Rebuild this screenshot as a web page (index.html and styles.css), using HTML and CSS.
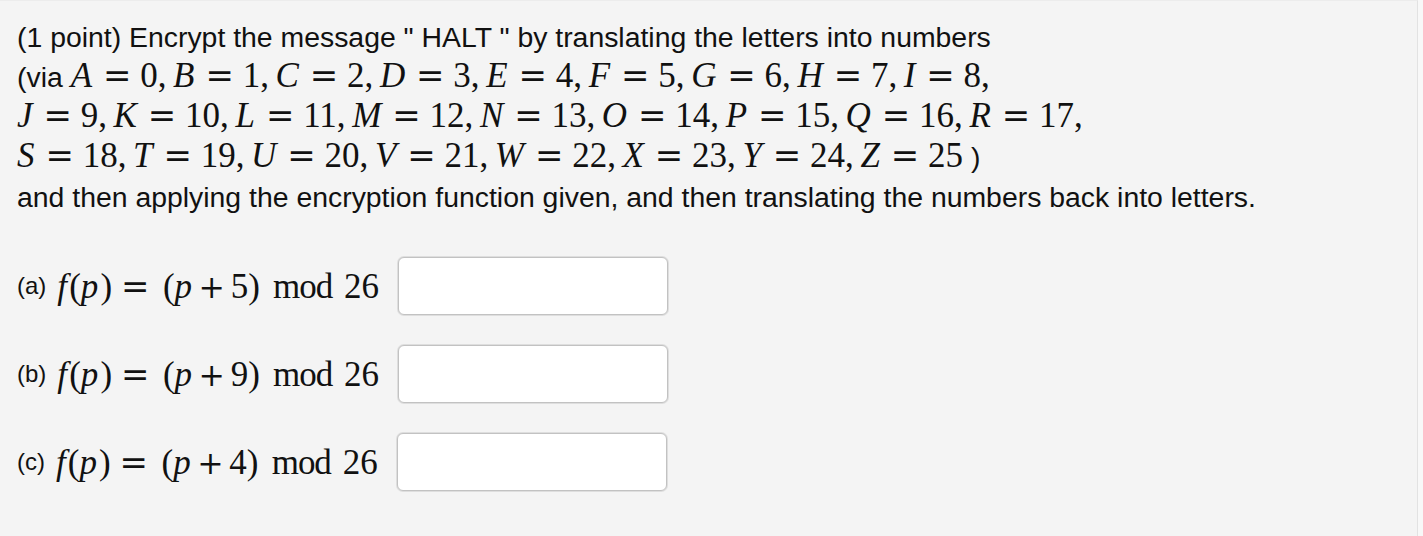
FILE: index.html
```html
<!DOCTYPE html>
<html lang="en">
<head>
<meta charset="utf-8">
<title>Encrypt the message</title>
<link rel="stylesheet" href="styles.css">
</head>
<body>
<div class="problem">
  <div class="line">(1 point) Encrypt the message " HALT " by translating the letters into numbers</div>
  <div class="line">(via <span class="m"><i>A</i><span class="rel">=</span>0<span class="punct">,</span><i>B</i><span class="rel">=</span>1<span class="punct">,</span><i>C</i><span class="rel">=</span>2<span class="punct">,</span><i>D</i><span class="rel">=</span>3<span class="punct">,</span><i>E</i><span class="rel">=</span>4<span class="punct">,</span><i>F</i><span class="rel">=</span>5<span class="punct">,</span><i>G</i><span class="rel">=</span>6<span class="punct">,</span><i>H</i><span class="rel">=</span>7<span class="punct">,</span><i>I</i><span class="rel">=</span>8<span class="punct">,</span></span></div>
  <div class="line"><span class="m"><i>J</i><span class="rel">=</span>9<span class="punct">,</span><i>K</i><span class="rel">=</span>10<span class="punct">,</span><i>L</i><span class="rel">=</span>11<span class="punct">,</span><i>M</i><span class="rel">=</span>12<span class="punct">,</span><i>N</i><span class="rel">=</span>13<span class="punct">,</span><i>O</i><span class="rel">=</span>14<span class="punct">,</span><i>P</i><span class="rel">=</span>15<span class="punct">,</span><i>Q</i><span class="rel">=</span>16<span class="punct">,</span><i>R</i><span class="rel">=</span>17<span class="punct">,</span></span></div>
  <div class="line"><span class="m"><i>S</i><span class="rel">=</span>18<span class="punct">,</span><i>T</i><span class="rel">=</span>19<span class="punct">,</span><i>U</i><span class="rel">=</span>20<span class="punct">,</span><i>V</i><span class="rel">=</span>21<span class="punct">,</span><i>W</i><span class="rel">=</span>22<span class="punct">,</span><i>X</i><span class="rel">=</span>23<span class="punct">,</span><i>Y</i><span class="rel">=</span>24<span class="punct">,</span><i>Z</i><span class="rel">=</span>25</span> )</div>
  <div class="line">and then applying the encryption function given, and then translating the numbers back into letters.</div>

  <div class="parts">
    <div class="part">
      <span class="lbl">(a)</span>
      <span class="m"><i>f</i>(<i>p</i>)<span class="rel wide">=</span>(<i>p</i><span class="bin">+</span>5)<span class="op">mod</span>26</span>
      <input class="answer" type="text" aria-label="answer a">
    </div>
    <div class="part">
      <span class="lbl">(b)</span>
      <span class="m"><i>f</i>(<i>p</i>)<span class="rel wide">=</span>(<i>p</i><span class="bin">+</span>9)<span class="op">mod</span>26</span>
      <input class="answer" type="text" aria-label="answer b">
    </div>
    <div class="part">
      <span class="lbl">(c)</span>
      <span class="m"><i>f</i>(<i>p</i>)<span class="rel wide">=</span>(<i>p</i><span class="bin">+</span>4)<span class="op">mod</span>26</span>
      <input class="answer" type="text" aria-label="answer c">
    </div>
  </div>
</div>
</body>
</html>
```

FILE: styles.css
```css
html, body {
  margin: 0;
  padding: 0;
  background: #f8f8f8;
}

.problem {
  box-sizing: border-box;
  width: 1418px;
  height: 536px;
  background: #f4f4f4;
  border-top: 1px solid #ececec;
  border-right: 1px solid #e2e2e2;
  padding: 16px 0 0 17px;
  color: #111;
  font-family: "Liberation Sans", Arial, sans-serif;
  font-size: 28.4px;
}

.line {
  height: 40px;
  line-height: 40px;
  white-space: nowrap;
}

.m {
  font-family: "Liberation Serif", "Times New Roman", serif;
  font-size: 35px;
  line-height: 1;
}

.m i {
  font-style: italic;
  margin-right: 0.06em;
}

.rel {
  font-family: "DejaVu Serif", serif;
  font-size: 0.97em;
  margin: 0 0.26em;
}

.punct {
  margin-right: 0.19em;
}

.parts {
  margin-top: 40px;
  display: flex;
  flex-direction: column;
  gap: 30px;
}

.part {
  display: flex;
  align-items: center;
  height: 58px;
}

.lbl {
  font-family: "Liberation Sans Narrow", "Liberation Sans", sans-serif;
  font-size: 24px;
  margin-right: 11px;
}

.rel.wide {
  margin: 0 0.4em 0 0.26em;
}

.bin {
  font-family: "DejaVu Serif", serif;
  font-size: 0.9em;
  margin: 0 0.18em 0 0.14em;
}

.op {
  letter-spacing: -0.03em;
  margin: 0 0.34em 0 0.38em;
}

.answer {
  box-sizing: border-box;
  width: 270px;
  height: 58px;
  margin-left: 19px;
  background: #fff;
  border: 1px solid #c2c2c2;
  border-radius: 6px;
  box-shadow: 0 0 0 1px #dedede;
  padding: 4px 8px;
  font-family: "Liberation Sans", Arial, sans-serif;
  font-size: 20px;
}
```
